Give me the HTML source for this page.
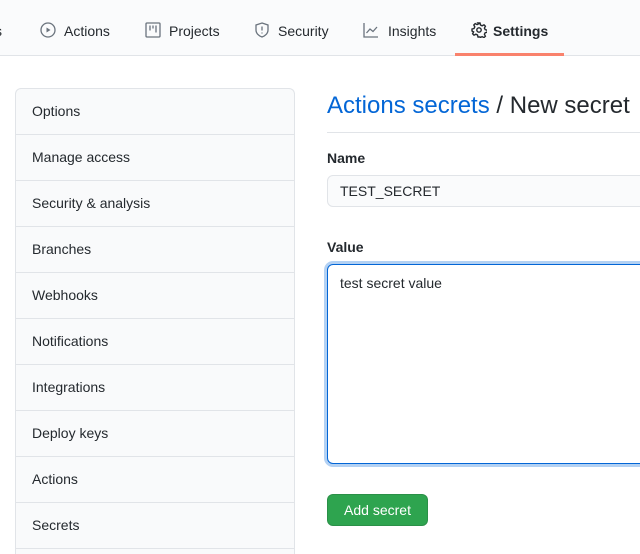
<!DOCTYPE html>
<html style="overflow:hidden;height:554px"><head><style>
*{box-sizing:border-box;margin:0;padding:0}
html,body{width:640px;height:554px;overflow:hidden}
body{background:#fff;font-family:"Liberation Sans",sans-serif;color:#24292e;font-size:14px;position:relative}
.hdr{position:absolute;left:0;top:0;width:640px;height:56px;background:#fafbfc;border-bottom:1px solid #e1e4e8}
.tab{position:absolute;top:22px;font-size:14px;color:#24292e;line-height:18px}
.ico{position:absolute;top:22px}
.ul{position:absolute;left:455px;top:53px;width:109px;height:3px;background:#f9826c}
.side{position:absolute;left:15px;top:88px;width:280px;height:466px;border:1px solid #e1e4e8;border-bottom:none;border-radius:6px 6px 0 0;background:#f9fafb;overflow:hidden}
.side div{height:46px;border-bottom:1px solid #e1e4e8;padding-left:16px;line-height:45px;font-size:14px}
h1{position:absolute;left:327px;top:90px;font-size:24px;font-weight:normal;line-height:32px;white-space:nowrap}
h1 span{color:#0366d6}
.hr{position:absolute;left:327px;top:132px;width:320px;height:1px;background:#e1e4e8}
.lbl{position:absolute;left:327px;font-weight:bold;font-size:14px}
.inp{position:absolute;left:327px;top:175px;width:330px;height:32px;border:1px solid #e1e4e8;border-radius:6px;background:#fafbfc;padding-left:12px;line-height:30px}
.ta{position:absolute;left:327px;top:264px;width:330px;height:200px;border:1px solid #0366d6;border-radius:6px;box-shadow:0 0 0 3px rgba(3,102,214,.3);padding:10px 12px;background:#fff}
.btn{position:absolute;left:327px;top:494px;width:101px;height:32px;background:#2ea44f;border:1px solid rgba(27,31,35,.15);border-radius:6px;color:#fff;text-align:center;line-height:30px;font-size:14px}
</style></head><body>
<div class="hdr">
<div class="tab" style="left:-5px">s</div>
<svg class="ico" style="left:40px" width="16" height="16" viewBox="0 0 16 16" fill="none" stroke="#6a737d" stroke-width="1.3"><circle cx="8" cy="8" r="7"/><path d="M6.5 5.5v5l4-2.5z" fill="#6a737d" stroke="none"/></svg>
<div class="tab" style="left:64px">Actions</div>
<svg class="ico" style="left:145px" width="16" height="16" viewBox="0 0 16 16" fill="none" stroke="#6a737d" stroke-width="1.3"><rect x="1" y="1" width="14" height="14" rx="1"/><path d="M5 3.5v5M8 3.5v3M11 3.5v7"/></svg>
<div class="tab" style="left:169px">Projects</div>
<svg class="ico" style="left:254px" width="16" height="16" viewBox="0 0 16 16" fill="none" stroke="#6a737d" stroke-width="1.3"><path d="M8 1l6 2v5c0 3.5-3 6-6 7-3-1-6-3.5-6-7V3z"/><path d="M8 4.5v4M8 10.5v1"/></svg>
<div class="tab" style="left:278px">Security</div>
<svg class="ico" style="left:363px" width="16" height="16" viewBox="0 0 16 16" fill="none" stroke="#6a737d" stroke-width="1.3"><path d="M1 1v14h14"/><path d="M3.5 11l3.5-4 3 2.5 4-4.5"/></svg>
<div class="tab" style="left:388px">Insights</div>
<svg class="ico" style="left:471px" width="16" height="16" viewBox="0 0 16 16" fill="none" stroke="#24292e" stroke-width="1.4"><circle cx="8" cy="8" r="2.2"/><path d="M7 1h2l.5 2 1.6.8 1.9-1 1.4 1.4-1 1.9.8 1.6 2 .5v2l-2 .5-.8 1.6 1 1.9-1.4 1.4-1.9-1-1.6.8L9 15H7l-.5-2-1.6-.8-1.9 1-1.4-1.4 1-1.9L1.8 9.5 1 9V7l2-.5.8-1.6-1-1.9 1.4-1.4 1.9 1 1.6-.8z"/></svg>
<div class="tab" style="left:493px;font-weight:bold">Settings</div>
<div class="ul"></div>
</div>
<div class="side">
<div>Options</div><div>Manage access</div><div>Security &amp; analysis</div><div>Branches</div><div>Webhooks</div><div>Notifications</div><div>Integrations</div><div>Deploy keys</div><div>Actions</div><div>Secrets</div>
</div>
<h1><span>Actions secrets</span> / New secret</h1>
<div class="hr"></div>
<div class="lbl" style="top:150px">Name</div>
<div class="inp">TEST_SECRET</div>
<div class="lbl" style="top:239px">Value</div>
<div class="ta">test secret value</div>
<div class="btn">Add secret</div>
</body></html>
